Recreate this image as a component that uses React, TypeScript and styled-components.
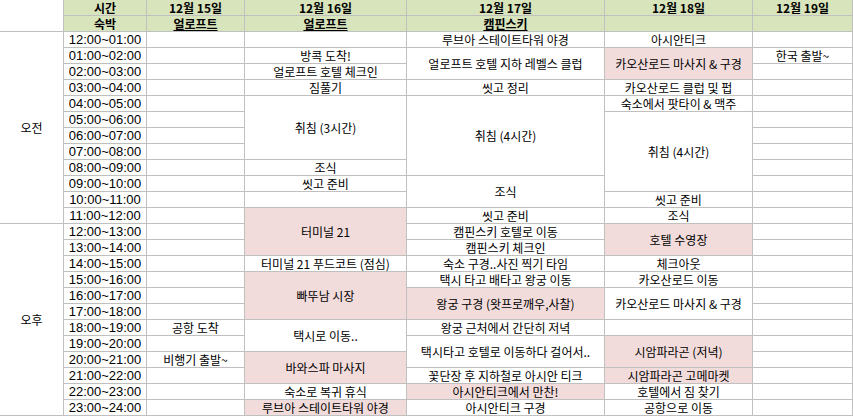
import React from "react";
import styled, {createGlobalStyle} from "styled-components";

const GlobalStyle = createGlobalStyle`
    html, body {
        margin: 0;
        padding: 0;
        background: #ffffff;
    }
    body {
        font-family: "Noto Sans CJK KR", "Noto Sans", sans-serif;
        color: #000;
    }
`

type Entry = [number, number, string, boolean?]

const days = ['12월 15일', '12월 16일', '12월 17일', '12월 18일', '12월 19일']
const hotels = ['얼로프트', '얼로프트', '캠핀스키', '', '']

const pad = (n: number) => (n < 10 ? '0' + n : '' + n)
const times = Array.from({length: 24}, (_, i) => {
    const from = i === 0 ? 12 : i
    return `${pad(from)}:00~${pad(i + 1)}:00`
})

// each entry: first row, row span, text, pink
const schedule: Entry[][] = [
    [
        [18, 1, '공항 도착'],
        [20, 1, '비행기 출발~'],
    ],
    [
        [0, 1, ''],
        [1, 1, '방콕 도착!'],
        [2, 1, '얼로프트 호텔 체크인'],
        [3, 1, '짐풀기'],
        [4, 4, '취침 (3시간)'],
        [8, 1, '조식'],
        [9, 1, '씻고 준비'],
        [10, 1, ''],
        [11, 3, '터미널 21', true],
        [14, 1, '터미널 21 푸드코트 (점심)'],
        [15, 3, '빠뚜남 시장', true],
        [18, 2, '택시로 이동..'],
        [20, 2, '바와스파 마사지', true],
        [22, 1, '숙소로 복귀 휴식'],
        [23, 1, '루브아 스테이트타워 야경', true],
    ],
    [
        [0, 1, '루브아 스테이트타워 야경'],
        [1, 2, '얼로프트 호텔 지하 레벨스 클럽'],
        [3, 1, '씻고 정리'],
        [4, 5, '취침 (4시간)'],
        [9, 2, '조식'],
        [11, 1, '씻고 준비'],
        [12, 1, '캠핀스키 호텔로 이동'],
        [13, 1, '캠핀스키 체크인'],
        [14, 1, '숙소 구경..사진 찍기 타임'],
        [15, 1, '택시 타고 배타고 왕궁 이동'],
        [16, 2, '왕궁 구경 (왓프로깨우,사찰)', true],
        [18, 1, '왕궁 근처에서 간단히 저녁'],
        [19, 2, '택시타고 호텔로 이동하다 걸어서..'],
        [21, 1, '꽃단장 후 지하철로 아시안 티크'],
        [22, 1, '아시안티크에서 만찬!', true],
        [23, 1, '아시안티크 구경'],
    ],
    [
        [0, 1, '아시안티크'],
        [1, 2, '카오산로드 마사지 & 구경', true],
        [3, 1, '카오산로드 클럽 및 펍'],
        [4, 1, '숙소에서 팟타이 & 맥주'],
        [5, 5, '취침 (4시간)'],
        [10, 1, '씻고 준비'],
        [11, 1, '조식'],
        [12, 2, '호텔 수영장', true],
        [14, 1, '체크아웃'],
        [15, 1, '카오산로드 이동'],
        [16, 2, '카오산로드 마사지 & 구경'],
        [18, 1, ''],
        [19, 2, '시암파라곤 (저녁)', true],
        [21, 1, '시암파라곤 고메마켓', true],
        [22, 1, '호텔에서 짐 찾기'],
        [23, 1, '공항으로 이동'],
    ],
    [
        [1, 1, '한국 출발~'],
    ],
]

// fill the empty hours so every hour keeps its own grid line
const fillColumn = (entries: Entry[]): Entry[] => {
    const used = new Set<number>()
    entries.forEach(([start, span]) => {
        for (let r = start; r < start + span; r++) used.add(r)
    })
    const rest: Entry[] = []
    for (let r = 0; r < 24; r++) if (!used.has(r)) rest.push([r, 1, ''])
    return [...entries, ...rest]
}

export default function App() {
    return (
        <>
            <GlobalStyle/>
            <Sheet>
                <Cell $col={1} $row={1} $span={2}/>
                <Head $col={2} $row={1}>시간</Head>
                <Head $col={2} $row={2}>숙박</Head>
                {days.map((d, i) => (
                    <Head key={d} $col={i + 3} $row={1}>{d}</Head>
                ))}
                {hotels.map((h, i) => (
                    <Head key={i} $col={i + 3} $row={2}>
                        {h && <Hotel>{h}</Hotel>}
                    </Head>
                ))}
                <Cell $col={1} $row={3} $span={12}>오전</Cell>
                <Cell $col={1} $row={15} $span={12}>오후</Cell>
                {times.map((t, i) => (
                    <TimeCell key={t} $col={2} $row={i + 3}>{t}</TimeCell>
                ))}
                {schedule.map((col, c) =>
                    fillColumn(col).map(([start, span, text, pink]) => (
                        <Cell key={`${c}-${start}`} $col={c + 3} $row={start + 3} $span={span} $pink={pink}>
                            {text}
                        </Cell>
                    ))
                )}
            </Sheet>
        </>
    )
}

const Sheet = styled.div`
    display: grid;
    grid-template-columns: 64px 83px 98px 162px 198px 148px 100px;
    grid-template-rows: repeat(26, 16px);
    width: 853px;
    font-size: 12px;
    line-height: 14px;
`

const Cell = styled.div<{ $col: number, $row: number, $span?: number, $pink?: boolean }>`
    grid-column: ${p => p.$col};
    grid-row: ${p => p.$row} / span ${p => p.$span || 1};
    box-sizing: border-box;
    border-right: 1px solid #c0c0c0;
    border-bottom: 1px solid #c0c0c0;
    background: ${p => (p.$pink ? '#f2dcdb' : '#ffffff')};
    display: flex;
    align-items: center;
    justify-content: center;
    white-space: nowrap;
`

const TimeCell = styled(Cell)`
    font-family: "Liberation Sans", Arial, sans-serif;
    font-size: 13px;
`

const Head = styled(Cell)`
    background: #d8e4bc;
    font-weight: 700;
`

const Hotel = styled.span`
    text-decoration: underline;
    text-underline-offset: 1px;
`
